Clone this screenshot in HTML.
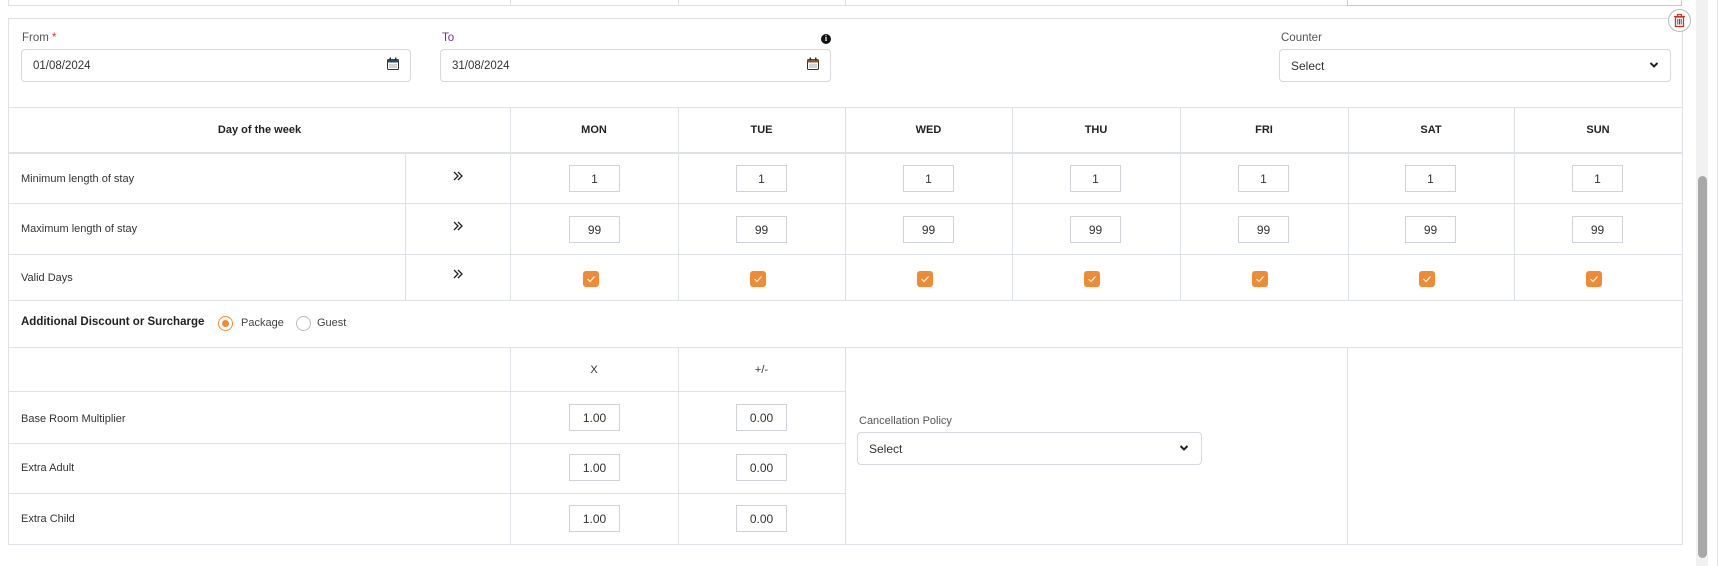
<!DOCTYPE html>
<html><head><meta charset="utf-8">
<style>
*{box-sizing:border-box;margin:0;padding:0}
body{width:1718px;height:566px;background:#fff;font-family:"Liberation Sans",sans-serif;color:#222;position:relative;overflow:hidden}
.a{position:absolute}
.hl{position:absolute;height:1px;background:#dee2e6}
.vl{position:absolute;width:1px;background:#dee2e6}
.lbl{position:absolute;font-size:11.5px;color:#555}
.inp{position:absolute;border:1px solid #d5d8dc;border-radius:4px;background:#fff;font-size:11.5px;color:#333;padding-left:11px;display:flex;align-items:center}
.box{position:absolute;width:51px;height:27px;border:1px solid #cfd2d6;font-size:12px;color:#333;display:flex;align-items:center;justify-content:center}
.txt{position:absolute;font-size:11px;color:#333}
.hd{position:absolute;font-size:11px;font-weight:bold;color:#222;text-align:center}
.cb{position:absolute;width:16px;height:16px;border-radius:3px;background:#f08a33}
.cb svg{position:absolute;left:3px;top:3px}
</style></head><body>
<div class="vl" style="left:8px;top:0;height:6px"></div>
<div class="hl" style="left:8px;top:5px;width:1340px"></div>
<div class="vl" style="left:510px;top:0;height:6px"></div>
<div class="vl" style="left:678px;top:0;height:6px"></div>
<div class="vl" style="left:845px;top:0;height:6px"></div>
<div class="a" style="left:1347px;top:-2px;width:335px;height:8px;border:1px solid #c8c8c8;border-top:none"></div>

<div class="a" style="left:8px;top:18px;width:1675px;height:527px;border:1px solid #dee2e6"></div>

<div class="lbl" style="left:22px;top:32px">From <span style="color:#e03131">*</span></div>
<div class="inp" style="left:21px;top:49px;width:390px;height:33px">01/08/2024</div>
<div class="lbl" style="left:442px;top:32px;color:#6b3a7a">To</div>
<div class="inp" style="left:440px;top:49px;width:391px;height:33px">31/08/2024</div>
<svg class="a" style="left:386px;top:57px" width="14" height="14" viewBox="0 0 14 14"><rect x="1.5" y="2.5" width="11" height="10" rx="1" fill="#fff" stroke="#333"/><rect x="1.5" y="2.5" width="11" height="3" fill="#2c4a6b"/><rect x="3.5" y="0.5" width="1.5" height="3" fill="#333"/><rect x="9" y="0.5" width="1.5" height="3" fill="#333"/><path d="M3.5 8h7M3.5 10h7" stroke="#555" stroke-dasharray="1 1"/></svg>
<svg class="a" style="left:806px;top:57px" width="14" height="14" viewBox="0 0 14 14"><rect x="1.5" y="2.5" width="11" height="10" rx="1" fill="#fff" stroke="#333"/><rect x="1.5" y="2.5" width="11" height="3" fill="#8a5a2b"/><rect x="3.5" y="0.5" width="1.5" height="3" fill="#333"/><rect x="9" y="0.5" width="1.5" height="3" fill="#333"/><path d="M3.5 8h7M3.5 10h7" stroke="#555" stroke-dasharray="1 1"/></svg>
<div class="a" style="left:821px;top:34px;width:10px;height:10px;border-radius:50%;background:#111;color:#fff;font-size:8px;font-weight:bold;text-align:center;line-height:10px;font-family:'Liberation Serif',serif">i</div>

<div class="lbl" style="left:1281px;top:32px">Counter</div>
<div class="inp" style="left:1279px;top:49px;width:392px;height:33px;font-size:12px">Select</div>
<svg class="a" style="left:1649px;top:61px" width="10" height="8" viewBox="0 0 10 8"><path d="M1.5 2l3.5 3.5L8.5 2" fill="none" stroke="#222" stroke-width="2"/></svg>

<div class="a" style="left:1668px;top:9px;width:23px;height:23px;border-radius:50%;border:1px solid #bbb;background:#fff"></div>
<svg class="a" style="left:1673px;top:13px" width="13" height="15" viewBox="0 0 13 15"><path d="M1 3.5h11M4.5 3.5V1.5h4v2" fill="none" stroke="#c0392b" stroke-width="1.2"/><rect x="2.5" y="4" width="8" height="9.5" fill="none" stroke="#c0392b" stroke-width="1.3"/><path d="M4.8 6v5.5M6.5 6v5.5M8.2 6v5.5" stroke="#6a3aa0" stroke-width="1"/></svg>

<div class="hl" style="left:9px;top:107px;width:1673px"></div>
<div class="hl" style="left:9px;top:152px;width:1673px;height:2px"></div>
<div class="hl" style="left:9px;top:203px;width:1673px"></div>
<div class="hl" style="left:9px;top:254px;width:1673px"></div>
<div class="hl" style="left:9px;top:300px;width:1673px"></div>
<div class="hl" style="left:9px;top:347px;width:1673px"></div>
<div class="hl" style="left:9px;top:391px;width:836px"></div>
<div class="hl" style="left:9px;top:443px;width:836px"></div>
<div class="hl" style="left:9px;top:493px;width:836px"></div>

<div class="vl" style="left:405px;top:153px;height:147px"></div>
<div class="vl" style="left:510px;top:107px;height:193px"></div>
<div class="vl" style="left:678px;top:107px;height:193px"></div>
<div class="vl" style="left:845px;top:107px;height:193px"></div>
<div class="vl" style="left:1012px;top:107px;height:193px"></div>
<div class="vl" style="left:1180px;top:107px;height:193px"></div>
<div class="vl" style="left:1348px;top:107px;height:193px"></div>
<div class="vl" style="left:1514px;top:107px;height:193px"></div>
<div class="vl" style="left:510px;top:347px;height:198px"></div>
<div class="vl" style="left:678px;top:347px;height:198px"></div>
<div class="vl" style="left:845px;top:347px;height:198px"></div>
<div class="vl" style="left:1347px;top:347px;height:198px"></div>

<div class="hd" style="left:9px;top:124px;width:501px">Day of the week</div>
<div class="hd" style="left:510px;top:124px;width:168px">MON</div>
<div class="hd" style="left:678px;top:124px;width:167px">TUE</div>
<div class="hd" style="left:845px;top:124px;width:167px">WED</div>
<div class="hd" style="left:1012px;top:124px;width:168px">THU</div>
<div class="hd" style="left:1180px;top:124px;width:168px">FRI</div>
<div class="hd" style="left:1348px;top:124px;width:166px">SAT</div>
<div class="hd" style="left:1514px;top:124px;width:168px">SUN</div>

<div class="txt" style="left:21px;top:173px">Minimum length of stay</div>
<div class="txt" style="left:21px;top:223px">Maximum length of stay</div>
<div class="txt" style="left:21px;top:272px">Valid Days</div>
<svg class="a" style="left:452px;top:170px" width="12" height="12" viewBox="0 0 12 12"><path d="M2 2l4 4-4 4M6 2l4 4-4 4" fill="none" stroke="#222" stroke-width="1.3"/></svg>
<svg class="a" style="left:452px;top:220px" width="12" height="12" viewBox="0 0 12 12"><path d="M2 2l4 4-4 4M6 2l4 4-4 4" fill="none" stroke="#222" stroke-width="1.3"/></svg>
<svg class="a" style="left:452px;top:268px" width="12" height="12" viewBox="0 0 12 12"><path d="M2 2l4 4-4 4M6 2l4 4-4 4" fill="none" stroke="#222" stroke-width="1.3"/></svg>

<div class="box" style="left:569px;top:165px">1</div>
<div class="box" style="left:736px;top:165px">1</div>
<div class="box" style="left:903px;top:165px">1</div>
<div class="box" style="left:1070px;top:165px">1</div>
<div class="box" style="left:1238px;top:165px">1</div>
<div class="box" style="left:1405px;top:165px">1</div>
<div class="box" style="left:1572px;top:165px">1</div>
<div class="box" style="left:569px;top:216px">99</div>
<div class="box" style="left:736px;top:216px">99</div>
<div class="box" style="left:903px;top:216px">99</div>
<div class="box" style="left:1070px;top:216px">99</div>
<div class="box" style="left:1238px;top:216px">99</div>
<div class="box" style="left:1405px;top:216px">99</div>
<div class="box" style="left:1572px;top:216px">99</div>

<div class="cb" style="left:583px;top:271px"><svg width="10" height="10" viewBox="0 0 10 10"><path d="M1.5 5l2.5 2.5 4.5-5" fill="none" stroke="#fff" stroke-width="1.2"/></svg></div>
<div class="cb" style="left:750px;top:271px"><svg width="10" height="10" viewBox="0 0 10 10"><path d="M1.5 5l2.5 2.5 4.5-5" fill="none" stroke="#fff" stroke-width="1.2"/></svg></div>
<div class="cb" style="left:917px;top:271px"><svg width="10" height="10" viewBox="0 0 10 10"><path d="M1.5 5l2.5 2.5 4.5-5" fill="none" stroke="#fff" stroke-width="1.2"/></svg></div>
<div class="cb" style="left:1084px;top:271px"><svg width="10" height="10" viewBox="0 0 10 10"><path d="M1.5 5l2.5 2.5 4.5-5" fill="none" stroke="#fff" stroke-width="1.2"/></svg></div>
<div class="cb" style="left:1252px;top:271px"><svg width="10" height="10" viewBox="0 0 10 10"><path d="M1.5 5l2.5 2.5 4.5-5" fill="none" stroke="#fff" stroke-width="1.2"/></svg></div>
<div class="cb" style="left:1419px;top:271px"><svg width="10" height="10" viewBox="0 0 10 10"><path d="M1.5 5l2.5 2.5 4.5-5" fill="none" stroke="#fff" stroke-width="1.2"/></svg></div>
<div class="cb" style="left:1586px;top:271px"><svg width="10" height="10" viewBox="0 0 10 10"><path d="M1.5 5l2.5 2.5 4.5-5" fill="none" stroke="#fff" stroke-width="1.2"/></svg></div>

<div class="a" style="left:21px;top:316px;font-size:11.5px;font-weight:bold;color:#222">Additional Discount or Surcharge</div>
<div class="a" style="left:218px;top:316px;width:15px;height:15px;border-radius:50%;border:1.5px solid #f08a33"></div>
<div class="a" style="left:222px;top:320px;width:7px;height:7px;border-radius:50%;background:#f08a33"></div>
<div class="txt" style="left:241px;top:317px;color:#444">Package</div>
<div class="a" style="left:296px;top:316px;width:15px;height:15px;border-radius:50%;border:1px solid #bbb"></div>
<div class="txt" style="left:317px;top:317px;color:#444">Guest</div>

<div class="txt" style="left:510px;top:364px;width:168px;text-align:center">X</div>
<div class="txt" style="left:678px;top:364px;width:167px;text-align:center">+/-</div>

<div class="txt" style="left:21px;top:413px">Base Room Multiplier</div>
<div class="txt" style="left:21px;top:462px">Extra Adult</div>
<div class="txt" style="left:21px;top:513px">Extra Child</div>
<div class="box" style="left:569px;top:404px">1.00</div>
<div class="box" style="left:736px;top:404px">0.00</div>
<div class="box" style="left:569px;top:454px">1.00</div>
<div class="box" style="left:736px;top:454px">0.00</div>
<div class="box" style="left:569px;top:505px">1.00</div>
<div class="box" style="left:736px;top:505px">0.00</div>

<div class="lbl" style="left:859px;top:415px;font-size:11px">Cancellation Policy</div>
<div class="inp" style="left:857px;top:432px;width:345px;height:33px;font-size:12px">Select</div>
<svg class="a" style="left:1179px;top:444px" width="10" height="8" viewBox="0 0 10 8"><path d="M1.5 2l3.5 3.5L8.5 2" fill="none" stroke="#222" stroke-width="2"/></svg>

<div class="a" style="left:1696px;top:0;width:12px;height:566px;background:#f1f1f1"></div>
<div class="a" style="left:1698px;top:176px;width:9px;height:382px;border-radius:5px;background:#a8a8a8"></div>
<div class="vl" style="left:1717px;top:0;height:566px;background:#e5e5e5"></div>
</body></html>
